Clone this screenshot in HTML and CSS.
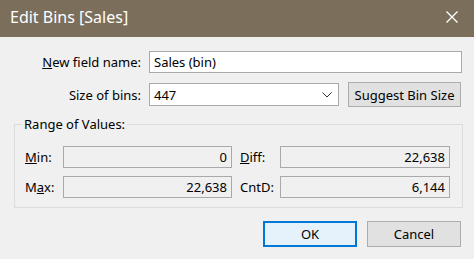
FILE: index.html
```html
<!DOCTYPE html>
<html>
<head>
<title>Edit Bins [Sales]</title>
<meta name="viewport" content="width=device-width, initial-scale=1">
<link rel="stylesheet" href="styles.css">
</head>
<body>

<div class="titlebar">
  <span class="title">Edit Bins [Sales]</span>
  <svg class="close" width="12" height="12" viewBox="0 0 12 12">
    <path d="M0.5 0.5 L11.5 11.5 M11.5 0.5 L0.5 11.5" stroke="#fff" stroke-width="1.3" fill="none"/>
  </svg>
</div>

<div class="dialog">
  <div class="form">
    <label class="lbl"><u>N</u>ew field name:</label>
    <div class="input">Sales (bin)</div>

    <label class="lbl">Size of bins:</label>
    <div class="row">
      <div class="select">
        <span>447</span>
        <svg width="10" height="6" viewBox="0 0 10 6">
          <path d="M0.5 0.5 L5 5 L9.5 0.5" stroke="#333" stroke-width="1" fill="none"/>
        </svg>
      </div>
      <button class="btn suggest">Suggest Bin Size</button>
    </div>
  </div>

  <fieldset class="group">
    <legend>Range of Values:</legend>
    <div class="range">
      <span><u>M</u>in:</span>
      <div class="box">0</div>
      <span class="lbl2"><u>D</u>iff:</span>
      <div class="box">22,638</div>

      <span>M<u>a</u>x:</span>
      <div class="box">22,638</div>
      <span class="lbl2">CntD:</span>
      <div class="box">6,144</div>
    </div>
  </fieldset>

  <div class="actions">
    <button class="btn default">OK</button>
    <button class="btn">Cancel</button>
  </div>
</div>

</body>
</html>
```

FILE: styles.css
```css
body {
  margin: 0;
  background-color: #f0f0f0;
  font-family: "Noto Sans", sans-serif;
  font-size: 13px;
  color: #000;
  width: 474px;
  height: 259px;
  overflow: hidden;
}

.titlebar {
  height: 37px;
  background-color: #7b6f5c;
  display: flex;
  align-items: center;
  justify-content: space-between;
  padding: 0 16px 0 10px;
}

.title {
  color: #fff;
  font-size: 16px;
  margin-top: -4px;
}

.close {
  margin-top: -4px;
}

.dialog {
  padding: 14px 12px 0 0;
}

.form {
  display: grid;
  grid-template-columns: 141px 1fr;
  column-gap: 8px;
  row-gap: 9px;
  align-items: center;
}

.lbl {
  text-align: right;
}

.input {
  height: 22px;
  box-sizing: border-box;
  background-color: #fff;
  border: 1px solid #a9a9a9;
  padding: 0 4px;
  line-height: 20px;
}

.row {
  display: flex;
  align-items: center;
  gap: 9px;
}

.select {
  width: 190px;
  height: 23px;
  box-sizing: border-box;
  background-color: #fff;
  border: 1px solid #a9a9a9;
  padding: 0 6px 0 4px;
  display: flex;
  align-items: center;
  justify-content: space-between;
}

.btn {
  font-family: inherit;
  font-size: 13px;
  color: #000;
  background-color: #e1e1e1;
  border: 1px solid #adadad;
  padding: 0;
  margin: 0;
  box-sizing: border-box;
}

.suggest {
  width: 113px;
  height: 25px;
}

.group {
  margin: 8px 0 0 14px;
  width: 449px;
  box-sizing: border-box;
  border: 1px solid #dcdcdc;
  padding: 13px 12px 9px 10px;
}

.group legend {
  padding: 0 2px;
  margin-left: -3px;
}

.range {
  display: grid;
  grid-template-columns: 38px 169px 48px 170px;
  row-gap: 8px;
  align-items: center;
}

.lbl2 {
  padding-left: 8px;
}

.box {
  height: 22px;
  box-sizing: border-box;
  border: 1px solid #a9a9a9;
  text-align: right;
  padding: 0 4px;
  line-height: 20px;
}

.actions {
  display: flex;
  justify-content: flex-end;
  gap: 10px;
  margin-top: 13px;
  padding-right: 1px;
}

.actions .btn {
  width: 94px;
  height: 26px;
}

.btn.default {
  background-color: #e5f1fb;
  border: 2px solid #0078d7;
}
```
